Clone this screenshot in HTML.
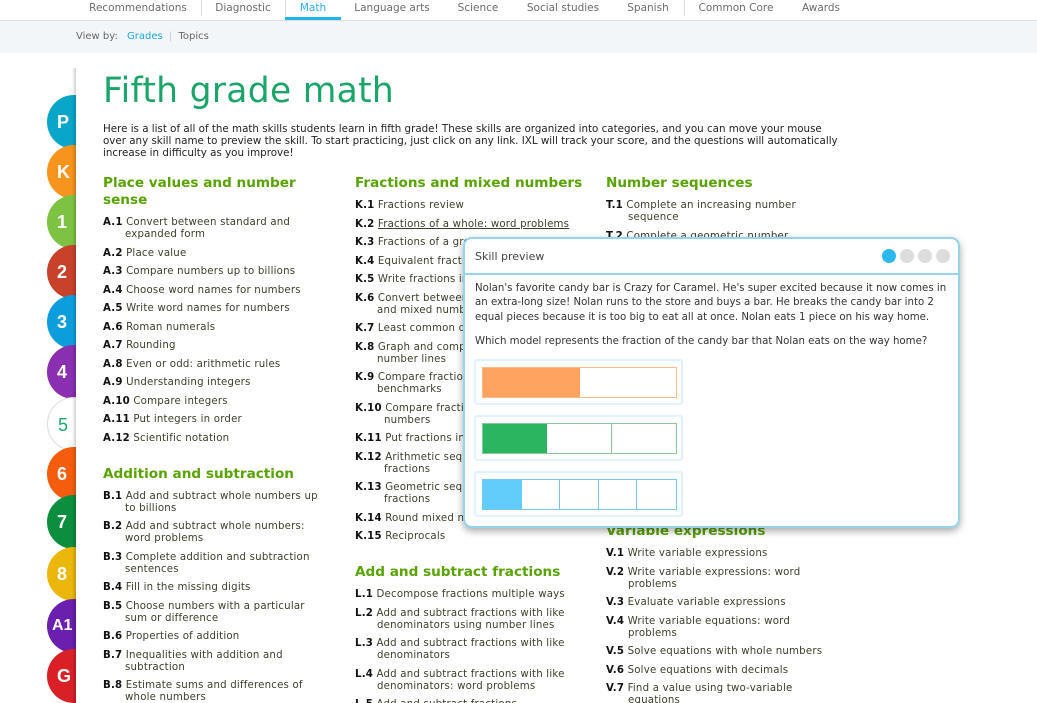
<!DOCTYPE html>
<html><head><meta charset="utf-8"><style>
*{margin:0;padding:0;box-sizing:border-box}
html,body{width:1037px;height:703px;overflow:hidden}
body{background:#fff;font-family:"DejaVu Sans","Liberation Sans",sans-serif;position:relative;color:#333}
.tab{position:absolute;top:2px;font-size:10.5px;color:#6b6b6b;transform:translateX(-50%);white-space:nowrap}
.sep{position:absolute;top:0;width:1px;height:16px;background:#ddd}
#sub{position:absolute;top:20px;left:0;width:1037px;height:33px;background:#f3f6f9;border-top:1px solid #ddd}
.circ{position:absolute;left:47px;width:54px;height:54px;border-radius:50%;color:#fff;font-size:18px;font-weight:bold;line-height:54px;padding-left:10px;font-family:"Liberation Sans",sans-serif}
#panel{position:absolute;left:76px;top:68px;width:961px;height:635px;background:#fff}
#shad{position:absolute;left:72px;top:68px;width:4px;height:635px;background:linear-gradient(to right,rgba(0,0,0,0),rgba(0,0,0,.18))}
h1{position:absolute;left:103px;top:71px;font-size:34.5px;font-weight:normal;color:#1aa56a;letter-spacing:0.3px}
.intro{position:absolute;left:103px;top:123px;width:740px;font-size:10.3px;line-height:12px;color:#222}
.col{position:absolute;width:225px;overflow:visible}
.col h2{font-size:13.6px;color:#58a300;font-weight:bold;line-height:17px;margin-bottom:8px}
.it{font-size:10.2px;line-height:12px;color:#3d3d2a;padding-left:22px;text-indent:-22px;margin-bottom:6.5px;letter-spacing:.2px}
.it b{color:#111;font-weight:bold}
.it.w{padding-left:29px;text-indent:-29px}
.nw{white-space:nowrap}
#pop{position:absolute;left:463px;top:237px;width:497px;height:291px;background:#fff;border:2px solid #93d4ee;border-radius:9px;box-shadow:0 3px 8px rgba(0,0,0,.35)}
.bx{position:absolute;left:9px;width:209px;height:46px;border:2px solid #e0f2fb;border-radius:3px}
.bar{position:absolute;left:6px;top:6px;width:195px;height:31px;display:flex}
</style></head><body>
<div class="tab" style="left:138px">Recommendations</div>
<div class="sep" style="left:201px"></div>
<div class="tab" style="left:243px">Diagnostic</div>
<div class="sep" style="left:285px"></div>
<div class="tab" style="left:313px;color:#29aee6">Math</div>
<div style="position:absolute;left:285px;top:17px;width:56px;height:3px;background:#1fb5ea"></div>
<div class="tab" style="left:392px">Language arts</div>
<div class="tab" style="left:478px">Science</div>
<div class="tab" style="left:563px">Social studies</div>
<div class="tab" style="left:648px">Spanish</div>
<div class="sep" style="left:684px"></div>
<div class="tab" style="left:736px">Common Core</div>
<div class="tab" style="left:821px">Awards</div>
<div id="sub"><div style="position:absolute;left:76px;top:10px;font-size:10px;color:#666">View by: <span style="color:#1ca8e3;margin-left:6px">Grades</span> <span style="color:#ccc;margin:0 3px">|</span> Topics</div></div>

<div class="circ" style="top:95px;background:#0aa6c9">P</div>
<div class="circ" style="top:145px;background:#f7941d">K</div>
<div class="circ" style="top:195px;background:#7dc243">1</div>
<div class="circ" style="top:245px;background:#c8412b">2</div>
<div class="circ" style="top:295px;background:#0c9edc">3</div>
<div class="circ" style="top:345px;background:#8a2fb0">4</div>
<div class="circ" style="top:397px;background:#fff;color:#19a86b;font-weight:normal;border:1px solid #ddd">5</div>
<div class="circ" style="top:447px;background:#f45d0d">6</div>
<div class="circ" style="top:495px;background:#0b8f3e">7</div>
<div class="circ" style="top:547px;background:#ebb70b">8</div>
<div class="circ" style="top:599px;background:#6a1fae;font-size:16px;padding-left:5px">A1</div>
<div class="circ" style="top:649px;background:#d92026">G</div>

<div id="panel"></div>
<div id="shad"></div>
<h1>Fifth grade math</h1>
<div class="intro">Here is a list of all of the math skills students learn in fifth grade! These skills are organized into categories, and you can move your mouse over any skill name to preview the skill. To start practicing, just click on any link. IXL will track your score, and the questions will automatically increase in difficulty as you improve!</div>

<div class="col" style="left:103px;top:175px">
<h2>Place values and number sense</h2>
<div class="it"><b>A.1</b> Convert between standard and expanded form</div>
<div class="it"><b>A.2</b> Place value</div>
<div class="it"><b>A.3</b> Compare numbers up to billions</div>
<div class="it"><b>A.4</b> Choose word names for numbers</div>
<div class="it"><b>A.5</b> Write word names for numbers</div>
<div class="it"><b>A.6</b> Roman numerals</div>
<div class="it"><b>A.7</b> Rounding</div>
<div class="it"><b>A.8</b> Even or odd: arithmetic rules</div>
<div class="it"><b>A.9</b> Understanding integers</div>
<div class="it"><b>A.10</b> Compare integers</div>
<div class="it"><b>A.11</b> Put integers in order</div>
<div class="it"><b>A.12</b> Scientific notation</div>
<h2 style="margin-top:21px">Addition and subtraction</h2>
<div class="it"><b>B.1</b> Add and subtract whole numbers up to billions</div>
<div class="it"><b>B.2</b> Add and subtract whole numbers: word problems</div>
<div class="it"><b>B.3</b> Complete addition and subtraction sentences</div>
<div class="it"><b>B.4</b> Fill in the missing digits</div>
<div class="it"><b>B.5</b> Choose numbers with a particular sum or difference</div>
<div class="it"><b>B.6</b> Properties of addition</div>
<div class="it"><b>B.7</b> Inequalities with addition and subtraction</div>
<div class="it"><b>B.8</b> Estimate sums and differences of whole numbers</div>
</div>

<div class="col" style="left:355px;top:175px">
<h2 class="nw">Fractions and mixed numbers</h2>
<div class="it"><b>K.1</b> Fractions review</div>
<div class="it"><b>K.2</b> <u>Fractions of a whole: word problems</u></div>
<div class="it"><b>K.3</b> Fractions of a group</div>
<div class="it"><b>K.4</b> Equivalent fractions</div>
<div class="it"><b>K.5</b> Write fractions in lowest terms</div>
<div class="it"><b>K.6</b> Convert between improper fractions<br>and mixed numbers</div>
<div class="it"><b>K.7</b> Least common denominator</div>
<div class="it"><b>K.8</b> Graph and compare fractions on<br>number lines</div>
<div class="it"><b>K.9</b> Compare fractions using<br>benchmarks</div>
<div class="it w"><b>K.10</b> Compare fractions and mixed<br>numbers</div>
<div class="it"><b>K.11</b> Put fractions in order</div>
<div class="it w"><b>K.12</b> Arithmetic sequences with<br>fractions</div>
<div class="it w"><b>K.13</b> Geometric sequences with<br>fractions</div>
<div class="it"><b>K.14</b> Round mixed numbers</div>
<div class="it"><b>K.15</b> Reciprocals</div>
<h2 class="nw" style="margin-top:21px">Add and subtract fractions</h2>
<div class="it"><b>L.1</b> Decompose fractions multiple ways</div>
<div class="it"><b>L.2</b> Add and subtract fractions with like denominators using number lines</div>
<div class="it"><b>L.3</b> Add and subtract fractions with like denominators</div>
<div class="it"><b>L.4</b> Add and subtract fractions with like denominators: word problems</div>
<div class="it"><b>L.5</b> Add and subtract fractions</div>
</div>

<div class="col" style="left:606px;top:175px">
<h2>Number sequences</h2>
<div class="it"><b>T.1</b> Complete an increasing number sequence</div>
<div class="it"><b>T.2</b> Complete a geometric number sequence</div>
</div>
<div class="col" style="left:606px;top:523px">
<h2>Variable expressions</h2>
<div class="it"><b>V.1</b> Write variable expressions</div>
<div class="it"><b>V.2</b> Write variable expressions: word problems</div>
<div class="it"><b>V.3</b> Evaluate variable expressions</div>
<div class="it"><b>V.4</b> Write variable equations: word problems</div>
<div class="it"><b>V.5</b> Solve equations with whole numbers</div>
<div class="it"><b>V.6</b> Solve equations with decimals</div>
<div class="it"><b>V.7</b> Find a value using two-variable equations</div>
</div>

<div id="pop">
<div style="position:absolute;left:10px;top:11px;font-size:11px;color:#444">Skill preview</div>
<div style="position:absolute;left:417px;top:10px;display:flex">
<span style="width:14px;height:14px;border-radius:50%;background:#2bb8ee"></span>
<span style="width:14px;height:14px;border-radius:50%;background:#ddd;margin-left:4px"></span>
<span style="width:14px;height:14px;border-radius:50%;background:#ddd;margin-left:4px"></span>
<span style="width:14px;height:14px;border-radius:50%;background:#ddd;margin-left:4px"></span>
</div>
<div style="position:absolute;left:0;top:34px;width:493px;height:2px;background:#93d4ee"></div>
<div style="position:absolute;left:10px;top:43px;width:480px;font-size:10.2px;line-height:14.3px;color:#333">Nolan's favorite candy bar is Crazy for Caramel. He's super excited because it now comes in an extra-long size! Nolan runs to the store and buys a bar. He breaks the candy bar into 2 equal pieces because it is too big to eat all at once. Nolan eats 1 piece on his way home.</div>
<div style="position:absolute;left:10px;top:97px;font-size:10.2px;color:#333">Which model represents the fraction of the candy bar that Nolan eats on the way home?</div>
<div class="bx" style="top:120px"><div class="bar" style="border:1px solid #fdb98a"><div style="width:50%;background:#ffa460"></div></div></div>
<div class="bx" style="top:176px"><div class="bar" style="border:1px solid #8fc49a"><div style="width:33.3%;background:#2bb560"></div><div style="width:33.3%;border-right:1px solid #8fc49a"></div></div></div>
<div class="bx" style="top:232px"><div class="bar" style="border:1px solid #74c6ee"><div style="width:20%;background:#62cdfa"></div><div style="width:20%;border-right:1px solid #74c6ee"></div><div style="width:20%;border-right:1px solid #74c6ee"></div><div style="width:20%;border-right:1px solid #74c6ee"></div></div></div>
</div>
</body></html>
